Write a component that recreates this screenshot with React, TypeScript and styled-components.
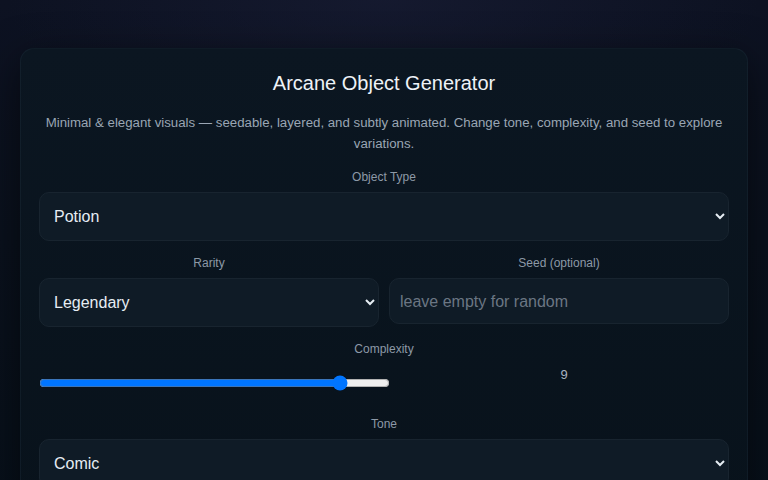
import React, { useState } from "react";
import styled, { createGlobalStyle } from "styled-components";

const Global = createGlobalStyle`
  html, body { margin: 0; padding: 0; }
  body {
    min-height: 100vh;
    background:
      radial-gradient(ellipse 70% 40% at 50% 0%, rgba(30, 34, 62, 0.45), transparent 70%),
      linear-gradient(180deg, #0d1222 0%, #0a111d 45%, #07101a 100%);
    font-family: "Liberation Sans", Arial, sans-serif;
    color: #e6edf3;
  }
`;

const Page = styled.div`
  padding: 48px 20px 0;
`;

const Card = styled.main`
  border: 1px solid rgba(120, 160, 190, 0.07);
  border-radius: 14px;
  background: linear-gradient(180deg, #0b1621 0%, #08121b 100%);
  box-shadow: 0 12px 40px rgba(0, 0, 0, 0.55);
  padding: 22px 18px 20px;
  display: flex;
  flex-direction: column;
`;

const Title = styled.h1`
  margin: 0 0 17px;
  font-size: 20px;
  line-height: 24px;
  font-weight: 500;
  text-align: center;
  color: #eef2f7;
`;

const Subtitle = styled.p`
  margin: 0 0 16px;
  font-size: 13.25px;
  line-height: 21px;
  text-align: center;
  color: #9aa6b4;
`;

const Field = styled.div<{ $after?: number }>`
  display: flex;
  flex-direction: column;
  margin-bottom: ${(p) => (p.$after ?? 15)}px;
`;

const Label = styled.label`
  display: block;
  font-size: 12px;
  line-height: 14px;
  color: #8d99a7;
  text-align: center;
  margin-bottom: 8px;
`;

const Select = styled.select`
  box-sizing: border-box;
  width: 100%;
  height: 49px;
  padding: 0 6px 0 10px;
  font-family: "Liberation Sans", Arial, sans-serif;
  font-size: 16px;
  color: #e6edf3;
  background: #0f1b26;
  border: 1px solid #18242f;
  border-radius: 10px;
  outline: none;
  color-scheme: dark;
`;

const Input = styled.input`
  box-sizing: border-box;
  width: 100%;
  height: 46px;
  padding: 1px 10px 0;
  font-family: "Liberation Sans", Arial, sans-serif;
  font-size: 16px;
  color: #e6edf3;
  background: #0f1b26;
  border: 1px solid #18242f;
  border-radius: 10px;
  outline: none;
  &::placeholder { color: #6b7683; }
`;

const Pair = styled.div`
  display: grid;
  grid-template-columns: 1fr 1fr;
  gap: 10px;
  margin-bottom: 15px;
`;

const SliderRow = styled.div`
  display: flex;
  align-items: flex-start;
  gap: 9px;
  margin-top: 2px;
  padding-bottom: 10px;
`;

const Range = styled.input`
  width: 351px;
  height: 16px;
  margin: 9px 0 0;
  flex: none;
  color-scheme: light;
`;

const Value = styled.output`
  flex: 1;
  margin-top: 1px;
  text-align: center;
  font-size: 13px;
  line-height: 16px;
  color: #aab4c0;
`;

export default function App() {
  const [complexity, setComplexity] = useState(9);
  return (
    <>
      <Global />
      <Page>
        <Card>
          <Title>Arcane Object Generator</Title>
          <Subtitle>
            Minimal &amp; elegant visuals — seedable, layered, and subtly animated. Change tone, complexity, and seed to
            explore variations.
          </Subtitle>
          <Field>
            <Label>Object Type</Label>
            <Select defaultValue="Potion">
              <option>Potion</option>
              <option>Sword</option>
              <option>Amulet</option>
              <option>Tome</option>
            </Select>
          </Field>
          <Pair>
            <Field $after={0}>
              <Label>Rarity</Label>
              <Select defaultValue="Legendary">
                <option>Common</option>
                <option>Rare</option>
                <option>Epic</option>
                <option>Legendary</option>
              </Select>
            </Field>
            <Field $after={0}>
              <Label>Seed (optional)</Label>
              <Input placeholder="leave empty for random" />
            </Field>
          </Pair>
          <Field $after={16}>
            <Label>Complexity</Label>
            <SliderRow>
              <Range
                type="range"
                min={2}
                max={10}
                value={complexity}
                onChange={(e) => setComplexity(Number(e.target.value))}
              />
              <Value>{complexity}</Value>
            </SliderRow>
          </Field>
          <Field>
            <Label>Tone</Label>
            <Select defaultValue="Comic">
              <option>Serious</option>
              <option>Whimsical</option>
              <option>Comic</option>
              <option>Dark</option>
            </Select>
          </Field>
        </Card>
      </Page>
    </>
  );
}
